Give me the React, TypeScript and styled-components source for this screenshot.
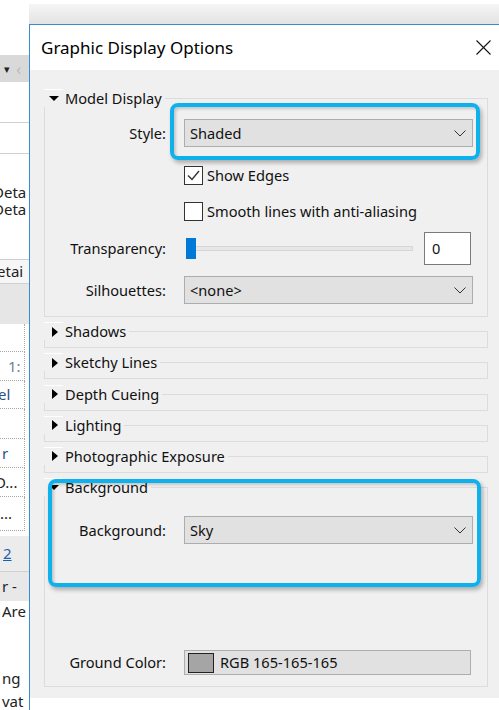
import React from "react";
import styled, { createGlobalStyle } from "styled-components";

const GlobalStyle = createGlobalStyle`
  html, body { margin: 0; padding: 0; background: #fff; }
  body { font-family: "Noto Sans", "Open Sans", sans-serif; color: #111; line-height: 19px; }
  * { box-sizing: border-box; }
`;

const Chevron = () => (
  <svg width="12" height="7" viewBox="0 0 12 7">
    <polyline points="0.5,0.5 6,6 11.5,0.5" fill="none" stroke="#333" strokeWidth="1" />
  </svg>
);

const CloseIcon = () => (
  <svg width="15" height="15" viewBox="0 0 15 15">
    <line x1="0.5" y1="0.5" x2="14.5" y2="14.5" stroke="#111" strokeWidth="1.1" />
    <line x1="14.5" y1="0.5" x2="0.5" y2="14.5" stroke="#111" strokeWidth="1.1" />
  </svg>
);

const CheckMark = () => (
  <svg width="17" height="17" viewBox="0 0 17 17">
    <polyline points="3,8.5 7,12.5 14,4" fill="none" stroke="#333" strokeWidth="1.4" />
  </svg>
);

const collapsed = ["Shadows", "Sketchy Lines", "Depth Cueing", "Lighting", "Photographic Exposure"];

const App = () => {
  return (
    <Page>
      <GlobalStyle />
      <BackApp>
        <Strip $h={55} />
        <Strip $h={27} $bg="#d9d9d9">
          <BackText $size={11} $indent={4}>▾</BackText>
          <BackText $size={17} $indent={6} $color="#bbb">‹</BackText>
        </Strip>
        <Strip $h={41} $line />
        <Strip $h={31} $line />
        <DetaBlock>
          <BackText $indent={-7}>Deta</BackText>
          <BackText $indent={-7}>Deta</BackText>
        </DetaBlock>
        <Strip $h={25} $bg="#f6f6f6" $line $topLine>
          <BackText $indent={-3}>etai</BackText>
        </Strip>
        <Strip $h={40} $bg="#e6e6e6" />
        <GridBlock>
          <Strip $h={28} $dotted />
          <Strip $h={29} $dotted>
            <BackText $indent={8} $color="#6d7f99">1:</BackText>
          </Strip>
          <Strip $h={28} $dotted>
            <BackText $indent={-2} $color="#2c4f8a">el</BackText>
          </Strip>
          <Strip $h={30} $dotted />
          <Strip $h={29} $dotted>
            <BackText $indent={2} $color="#2c4f8a">r</BackText>
          </Strip>
          <Strip $h={29} $dotted>
            <BackText $indent={-5}>D...</BackText>
          </Strip>
          <Strip $h={34} $dotted>
            <BackText $indent={0}>...</BackText>
          </Strip>
          <Strip $h={5} />
        </GridBlock>
        <Strip $h={36} $bg="#ececec" $line>
          <BackText $indent={3} $color="#1a5fb4" $underline>2</BackText>
        </Strip>
        <Strip $h={29} $bg="#e8e8e8">
          <BackText $indent={2}>r - </BackText>
        </Strip>
        <TailBlock>
          <BackText $indent={2}>Are</BackText>
          <Spacer />
          <BackText $indent={2}>ng</BackText>
          <BackText $indent={2}>vat</BackText>
        </TailBlock>
      </BackApp>

      <Main>
        <Toolbar />
        <Dialog>
          <TitleBar>
            <Title>Graphic Display Options</Title>
            <CloseIcon />
          </TitleBar>
          <Body>
            <Section>
              <SectionHeader>
                <ArrowBox>
                  <Arrow $open />
                </ArrowBox>
                <SectionTitle>Model Display</SectionTitle>
                <HeaderLine />
              </SectionHeader>
              <SectionBody $pt={12} $pb={12}>
                <Row $mt={0} $h={28}>
                  <Label>Style:</Label>
                  <Control>
                    <Select>
                      <span>Shaded</span>
                      <Chevron />
                    </Select>
                    <StyleHighlight />
                  </Control>
                </Row>
                <Row $mt={19} $h={19}>
                  <span />
                  <Check>
                    <Box>
                      <CheckMark />
                    </Box>
                    Show Edges
                  </Check>
                </Row>
                <Row $mt={17} $h={19}>
                  <span />
                  <Check>
                    <Box />
                    Smooth lines with anti-aliasing
                  </Check>
                </Row>
                <Row $mt={11} $h={33}>
                  <Label>Transparency:</Label>
                  <SliderRow>
                    <Slider>
                      <Thumb />
                      <Track />
                    </Slider>
                    <NumberBox>0</NumberBox>
                  </SliderRow>
                </Row>
                <Row $mt={11} $h={28}>
                  <Label>Silhouettes:</Label>
                  <Select>
                    <span>&lt;none&gt;</span>
                    <Chevron />
                  </Select>
                </Row>
              </SectionBody>
            </Section>

            {collapsed.map((name) => (
              <Section key={name}>
                <SectionHeader>
                  <ArrowBox>
                    <Arrow />
                  </ArrowBox>
                  <SectionTitle>{name}</SectionTitle>
                  <HeaderLine />
                </SectionHeader>
                <SectionBody $pt={7} $pb={0} />
              </Section>
            ))}

            <Section>
              <BackgroundHighlight />
              <SectionHeader>
                <ArrowBox>
                  <Arrow $open />
                </ArrowBox>
                <SectionTitle>Background</SectionTitle>
                <HeaderLine />
              </SectionHeader>
              <SectionBody $pt={20} $pb={11}>
                <Row $mt={0} $h={28}>
                  <Label>Background:</Label>
                  <Select>
                    <span>Sky</span>
                    <Chevron />
                  </Select>
                </Row>
                <Row $mt={106} $h={25}>
                  <Label>Ground Color:</Label>
                  <ColorField>
                    <Swatch $color="#a5a5a5" />
                    RGB 165-165-165
                  </ColorField>
                </Row>
              </SectionBody>
            </Section>
          </Body>
        </Dialog>
      </Main>
    </Page>
  );
};

export default App;

const Page = styled.div`
  width: 499px;
  height: 710px;
  display: flex;
  overflow: hidden;
  background: #fff;
`;

const BackApp = styled.div`
  width: 29px;
  flex: none;
  display: flex;
  flex-direction: column;
  overflow: hidden;
  font-size: 15px;
  color: #222;
`;

const Strip = styled.div<{ $h: number; $bg?: string; $line?: boolean; $dotted?: boolean; $topLine?: boolean }>`
  height: ${(p) => p.$h}px;
  flex: none;
  display: flex;
  align-items: center;
  white-space: nowrap;
  overflow: hidden;
  background: ${(p) => p.$bg ?? "#fff"};
  border-top: ${(p) => (p.$topLine ? "1px solid #cfcfcf" : "none")};
  border-bottom: ${(p) =>
    p.$line ? "1px solid #d0d0d0" : p.$dotted ? "1px dotted #a8a8a8" : "none"};
  border-right: ${(p) => (p.$dotted ? "1px dotted #a8a8a8" : "none")};
`;

const BackText = styled.span<{ $indent?: number; $size?: number; $color?: string; $underline?: boolean }>`
  margin-left: ${(p) => p.$indent ?? 0}px;
  font-size: ${(p) => p.$size ?? 15}px;
  color: ${(p) => p.$color ?? "#222"};
  text-decoration: ${(p) => (p.$underline ? "underline" : "none")};
  white-space: nowrap;
  line-height: 17px;
`;

const DetaBlock = styled.div`
  height: 105px;
  flex: none;
  display: flex;
  flex-direction: column;
  padding-top: 30px;
  overflow: hidden;
`;

const GridBlock = styled.div`
  flex: none;
  display: flex;
  flex-direction: column;
  padding-right: 4px;
`;

const TailBlock = styled.div`
  flex: 1;
  display: flex;
  flex-direction: column;
  padding-top: 2px;
  gap: 6px;
  overflow: hidden;
`;

const Spacer = styled.div`
  height: 44px;
`;

const Main = styled.div`
  flex: 1;
  display: flex;
  flex-direction: column;
  min-width: 0;
`;

const Toolbar = styled.div`
  height: 24px;
  flex: none;
  border-top: 4px solid #fff;
  background: linear-gradient(#f5f5f5, #e3e3e3);
`;

const Dialog = styled.div`
  flex: 1;
  display: flex;
  flex-direction: column;
  background: #fff;
  border-top: 1px solid #3a8ad9;
  border-left: 1px solid #3a8ad9;
`;

const TitleBar = styled.div`
  height: 45px;
  flex: none;
  display: flex;
  align-items: center;
  justify-content: space-between;
  padding: 0 8px 0 11px;
`;

const Title = styled.div`
  font-size: 17px;
  color: #000;
`;

const Body = styled.div`
  height: 628px;
  flex: none;
  background: #f0f0f0;
  padding: 19px 11px 0 14px;
  display: flex;
  flex-direction: column;
  gap: 5.2px;
`;

const Section = styled.div`
  position: relative;
  display: flex;
  flex-direction: column;
`;

const SectionHeader = styled.div`
  height: 18px;
  display: flex;
  align-items: center;
`;

const ArrowBox = styled.div`
  width: 19px;
  align-self: stretch;
  display: flex;
  align-items: center;
  justify-content: center;
  border-top: 1px solid #fff;
`;

const Arrow = styled.div<{ $open?: boolean }>`
  width: 0;
  height: 0;
  ${(p) =>
    p.$open
      ? `border-left: 5px solid transparent; border-right: 5px solid transparent; border-top: 5px solid #000; margin-left: 1px;`
      : `border-top: 5px solid transparent; border-bottom: 5px solid transparent; border-left: 6px solid #000; margin-left: 3px;`}
`;

const SectionTitle = styled.div`
  font-size: 14.6px;
  line-height: 18px;
  color: #111;
  padding: 0 3px 0 2px;
  white-space: nowrap;
`;

const HeaderLine = styled.div`
  flex: 1;
  align-self: flex-end;
  height: 9px;
  border-top: 1px solid #dcdcdc;
  border-right: 1px solid #dcdcdc;
`;

const SectionBody = styled.div<{ $pt: number; $pb: number }>`
  border: 1px solid #dcdcdc;
  border-top: none;
  padding: ${(p) => p.$pt}px 14px ${(p) => p.$pb}px 0;
  display: flex;
  flex-direction: column;
`;

const Row = styled.div<{ $mt: number; $h: number }>`
  height: ${(p) => p.$h}px;
  display: grid;
  grid-template-columns: 121px 1fr;
  column-gap: 18px;
  align-items: center;
  margin-top: ${(p) => p.$mt}px;
`;

const Label = styled.div`
  text-align: right;
  font-size: 14.6px;
  color: #111;
  white-space: nowrap;
`;

const Control = styled.div`
  position: relative;
`;

const Select = styled.div`
  height: 28px;
  display: flex;
  align-items: center;
  justify-content: space-between;
  padding: 0 6px 0 5px;
  background: #e1e1e1;
  border: 1px solid #adadad;
  font-size: 14.6px;
  color: #111;
`;

const Highlight = styled.div`
  position: absolute;
  border: 4px solid #0fb1ec;
  border-radius: 8px;
  box-shadow: 2px 3px 4px rgba(0, 0, 0, 0.28), inset 2px 2px 3px rgba(0, 0, 0, 0.18);
  pointer-events: none;
  z-index: 2;
`;

const StyleHighlight = styled(Highlight)`
  top: -16px;
  left: -14px;
  right: -7px;
  bottom: -13px;
`;

const BackgroundHighlight = styled(Highlight)`
  top: 1px;
  left: 4px;
  width: 433px;
  height: 108px;
`;

const Check = styled.label`
  height: 19px;
  display: flex;
  align-items: center;
  gap: 4px;
  font-size: 14.6px;
  color: #111;
  white-space: nowrap;
`;

const Box = styled.span`
  width: 19px;
  height: 19px;
  flex: none;
  border: 1px solid #333;
  background: #fff;
  display: flex;
  align-items: center;
  justify-content: center;
`;

const SliderRow = styled.div`
  display: flex;
  align-items: center;
  gap: 11px;
  padding-right: 2px;
`;

const Slider = styled.div`
  flex: 1;
  display: flex;
  align-items: center;
  margin-left: 2px;
`;

const Thumb = styled.div`
  width: 10px;
  height: 21px;
  background: #0078d7;
  flex: none;
`;

const Track = styled.div`
  flex: 1;
  height: 5px;
  background: #e7e7e7;
  border: 1px solid #d6d6d6;
  border-left: none;
`;

const NumberBox = styled.div`
  width: 47px;
  height: 33px;
  flex: none;
  background: #fff;
  border: 1px solid #7a7a7a;
  display: flex;
  align-items: center;
  padding-left: 7px;
  font-size: 14.6px;
  color: #111;
`;

const ColorField = styled.div`
  height: 25px;
  margin-right: 2px;
  display: flex;
  align-items: center;
  gap: 6px;
  padding-left: 3px;
  background: #e1e1e1;
  border: 1px solid #adadad;
  font-size: 14.6px;
  color: #111;
`;

const Swatch = styled.span<{ $color: string }>`
  width: 26px;
  height: 20px;
  flex: none;
  background: ${(p) => p.$color};
  border: 1px solid #222;
`;
